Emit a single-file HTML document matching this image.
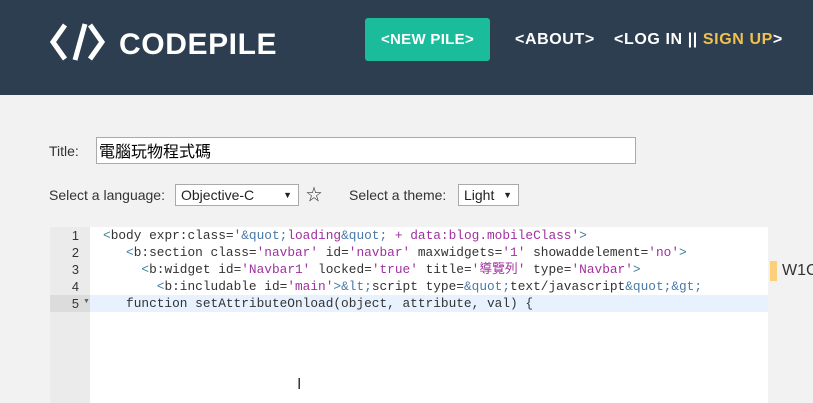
<!DOCTYPE html><html><head><meta charset="utf-8"><style>
body{margin:0;width:813px;height:403px;overflow:hidden;background:#f2f2f2;font-family:"Liberation Sans","Noto Sans CJK TC",sans-serif;position:relative}
.hd{position:absolute;left:0;top:0;width:813px;height:95px;background:#2d3e50}
.nav{position:absolute;color:#fff;font-weight:bold;font-size:16px;top:31px;letter-spacing:0.6px}
.btn{position:absolute;left:365px;top:18px;width:125px;height:43px;background:#1abc9c;border-radius:3px;color:#fff;font-weight:bold;font-size:15px;text-align:center;line-height:43px;letter-spacing:0.3px}
.lbl{position:absolute;font-size:14px;color:#333}
.sel{position:absolute;border:1px solid #aaa;background:#fff;font-size:14px;height:22px;line-height:21px;padding-left:5px;box-sizing:border-box;color:#222}
.sel b{position:absolute;right:6px;top:0;font-size:9px}
.ed{position:absolute;left:50px;top:227px;width:718px;height:176px;background:#fff}
.gut{position:absolute;left:0;top:0;width:40px;height:176px;background:#ebebeb}
.ln{position:absolute;left:0;width:29px;font:12.8px "Liberation Sans",sans-serif;color:#333;text-align:right}
.code{position:absolute;left:53px;font:12.8px "Liberation Mono","Noto Sans CJK TC",monospace;color:#333;white-space:pre;height:17px;line-height:17px}
.t{color:#3f7f9f}.s{color:#a0309f}.e{color:#4a7aa8}
</style></head><body>
<div class="hd">
<svg style="position:absolute;left:50px;top:22px" width="58" height="40" viewBox="0 0 58 40"><path d="M15 3 L3 20 L15 37" stroke="#fff" stroke-width="5" fill="none"/><path d="M35 2 L25 38" stroke="#fff" stroke-width="5"/><path d="M40 3 L52 20 L40 37" stroke="#fff" stroke-width="5" fill="none"/></svg>
<div style="position:absolute;left:119px;top:28px;color:#fff;font-weight:bold;font-size:30px;letter-spacing:0.6px">CODEPILE</div>
<div class="btn">&lt;NEW PILE&gt;</div>
<div class="nav" style="left:515px">&lt;ABOUT&gt;</div>
<div class="nav" style="left:614px">&lt;LOG IN || <span style="color:#f0c050">SIGN UP</span>&gt;</div>
</div>
<div class="lbl" style="left:49px;top:143px">Title:</div>
<div style="position:absolute;left:96px;top:137px;width:540px;height:27px;border:1px solid #aaa;background:#fff;box-sizing:border-box;font-size:16px;line-height:25px;padding-left:2px;font-family:'Noto Sans CJK TC',sans-serif">電腦玩物程式碼</div>
<div class="lbl" style="left:49px;top:187px">Select a language:</div>
<div class="sel" style="left:175px;top:184px;width:124px">Objective-C<b>▼</b></div>
<div style="position:absolute;left:306px;top:181px;font-size:16px;color:#333">☆</div>
<div class="lbl" style="left:349px;top:187px">Select a theme:</div>
<div class="sel" style="left:458px;top:184px;width:61px">Light<b>▼</b></div>
<div style="position:absolute;left:770px;top:261px;width:7px;height:20px;background:#fccf7a"></div>
<div style="position:absolute;left:782px;top:262px;font-size:16px;color:#333">W1C</div>
<div class="ed"><div class="gut"></div>
<div style="position:absolute;left:0;top:68px;width:718px;height:17px;background:#e8f2fe"></div>
<div style="position:absolute;left:0;top:68px;width:40px;height:17px;background:#dcdcdc"></div>
<div class="ln" style="top:1px">1</div>
<div class="ln" style="top:18px">2</div>
<div class="ln" style="top:35px">3</div>
<div class="ln" style="top:52px">4</div>
<div class="ln" style="top:69px">5</div>
<div style="position:absolute;left:33px;top:71px;font-size:7px;color:#666">▼</div>
<div class="code" style="top:0"><span class="t">&lt;</span>body expr:class=<span class="s">'</span><span class="e">&amp;quot;</span><span class="s">loading</span><span class="e">&amp;quot;</span><span class="s"> + data:blog.mobileClass'</span><span class="t">&gt;</span></div>
<div class="code" style="top:17px">   <span class="t">&lt;</span>b:section class=<span class="s">'navbar'</span> id=<span class="s">'navbar'</span> maxwidgets=<span class="s">'1'</span> showaddelement=<span class="s">'no'</span><span class="t">&gt;</span></div>
<div class="code" style="top:34px">     <span class="t">&lt;</span>b:widget id=<span class="s">'Navbar1'</span> locked=<span class="s">'true'</span> title=<span class="s">'導覽列'</span> type=<span class="s">'Navbar'</span><span class="t">&gt;</span></div>
<div class="code" style="top:51px">       <span class="t">&lt;</span>b:includable id=<span class="s">'main'</span><span class="t">&gt;</span><span class="e">&amp;lt;</span>script type=<span class="e">&amp;quot;</span>text/javascript<span class="e">&amp;quot;&amp;gt;</span></div>
<div class="code" style="top:68px">   function setAttributeOnload(object, attribute, val) {</div>
</div>
<div style="position:absolute;left:297px;top:376px;font-size:16px;color:#333">I</div>
</body></html>
